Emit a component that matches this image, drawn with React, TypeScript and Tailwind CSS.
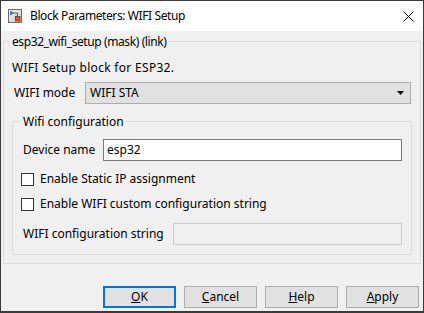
import React from 'react';

function BlockIcon() {
  return (
    <svg width="14" height="14" viewBox="0 0 14 14" className="shrink-0">
      <defs>
        <linearGradient id="bg" x1="0" y1="0" x2="1" y2="1">
          <stop offset="0" stopColor="#f4f4f4" />
          <stop offset="1" stopColor="#c9c9c9" />
        </linearGradient>
      </defs>
      <rect x="0.5" y="0.5" width="13" height="13" fill="url(#bg)" stroke="#6b6b6b" />
      {/* blue input port */}
      <path d="M2.5 2 L2.5 6 L5.5 4 Z" fill="#2a7fd4" stroke="#1c5fa8" strokeWidth="0.6" />
      <path d="M5.5 4 H9.5 V7" fill="none" stroke="#1c5fa8" strokeWidth="1" />
      {/* red block */}
      <rect x="7.5" y="7.5" width="4.5" height="4.5" fill="#e8501e" stroke="#8a2a0c" strokeWidth="0.8" />
    </svg>
  );
}

function CloseIcon() {
  return (
    <svg width="11" height="11" viewBox="0 0 11 11" className="shrink-0">
      <path d="M0.5 0.5 L10.5 10.5 M10.5 0.5 L0.5 10.5" stroke="#000" strokeWidth="1" />
    </svg>
  );
}

function Checkbox({ label }: { label: string }) {
  return (
    <div className="flex items-center h-[20px]">
      <span className="w-[13px] h-[13px] border border-[#333333] bg-white shrink-0" />
      <span className="ml-[6px] leading-[16px] whitespace-nowrap">{label}</span>
    </div>
  );
}

function DialogButton({ children, primary }: { children: React.ReactNode; primary?: boolean }) {
  return (
    <button
      type="button"
      className={`w-[73px] h-[22px] bg-[#e1e1e1] flex items-center justify-center leading-[16px] ${
        primary ? 'border-2 border-[#0078d7]' : 'border border-[#adadad]'
      }`}
    >
      {children}
    </button>
  );
}

export default function App() {
  return (
    <div className="w-[424px] h-[313px] border border-b-2 border-[#3a3a3a] flex flex-col bg-[#f0f0f0] font-['Noto_Sans',sans-serif] text-[12px] text-black overflow-hidden">
      {/* Title bar */}
      <div className="h-[30px] bg-white flex items-center shrink-0">
        <div className="ml-[7px]">
          <BlockIcon />
        </div>
        <span className="ml-[8px] leading-[16px] whitespace-nowrap tracking-[-0.4px]">Block Parameters: WIFI Setup</span>
        <div className="ml-auto mr-[9px]">
          <CloseIcon />
        </div>
      </div>

      {/* Body */}
      <div className="flex-1 flex flex-col px-[2px]">
        <fieldset className="mt-[3px] border border-[#dcdcdc] px-[8px] pb-[8px]">
          <legend className="ml-[-2px] px-[2px] leading-[15px] whitespace-nowrap tracking-[-0.4px]">esp32_wifi_setup (mask) (link)</legend>
          <p className="mt-[11px] leading-[16px] tracking-[0.3px]">WIFI Setup block for ESP32.</p>

          <div className="mt-[6px] flex items-center">
            <span className="ml-[2px] w-[71px] shrink-0 leading-[16px]">WIFI mode</span>
            <div className="flex-1 mr-[1px] h-[22px] bg-[#e1e1e1] border border-[#adadad] flex items-center pl-[4px] pr-[6px]">
              <span className="leading-[16px]">WIFI STA</span>
              <svg width="7" height="4" viewBox="0 0 7 4" className="ml-auto">
                <path d="M0 0 H7 L3.5 4 Z" fill="#000" />
              </svg>
            </div>
          </div>

          <fieldset className="mt-[10px] border border-[#dcdcdc] pl-[8px] pr-[9px] pb-[9px]">
            <legend className="ml-[0px] px-[2px] leading-[15px] whitespace-nowrap">Wifi configuration</legend>

            <div className="mt-[10px] flex items-center">
              <span className="ml-[2px] w-[80px] shrink-0 leading-[16px]">Device name</span>
              <div className="flex-1 h-[22px] bg-white border border-[#7a7a7a] flex items-center pl-[3px]">
                <span className="leading-[16px]">esp32</span>
              </div>
            </div>

            <div className="mt-[8px]">
              <Checkbox label="Enable Static IP assignment" />
            </div>
            <div className="mt-[5px]">
              <Checkbox label="Enable WIFI custom configuration string" />
            </div>

            <div className="mt-[9px] flex items-center">
              <span className="ml-[2px] w-[150px] shrink-0 leading-[16px] whitespace-nowrap">WIFI configuration string</span>
              <div className="flex-1 h-[22px] bg-[#f0f0f0] border border-[#cccccc]" />
            </div>
          </fieldset>
        </fieldset>

        {/* Buttons */}
        <div className="mt-auto mb-[3px] pr-[2px] flex justify-end gap-[8px]">
          <DialogButton primary>
            <span><u>O</u>K</span>
          </DialogButton>
          <DialogButton>
            <span><u>C</u>ancel</span>
          </DialogButton>
          <DialogButton>
            <span><u>H</u>elp</span>
          </DialogButton>
          <DialogButton>
            <span><u>A</u>pply</span>
          </DialogButton>
        </div>
      </div>
    </div>
  );
}
